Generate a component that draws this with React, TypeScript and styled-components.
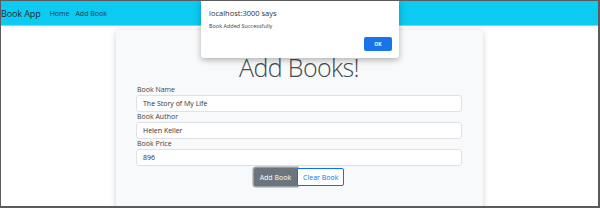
import React from "react";
import styled, { createGlobalStyle } from "styled-components";

const GlobalStyle = createGlobalStyle`
  html, body {
    margin: 0;
    padding: 0;
    background: #ffffff;
  }
  * {
    box-sizing: border-box;
  }
`;

const Frame = styled.div`
  position: relative;
  width: 600px;
  height: 208px;
  overflow: hidden;
  border-style: solid;
  border-color: #5b5b5b;
  border-width: 1px 2px 2px 1px;
  background: #ffffff;
  font-family: "Open Sans", "Noto Sans", sans-serif;
`;

const Navbar = styled.nav`
  display: flex;
  align-items: center;
  height: 25px;
  background: #0dcaf0;
  border-bottom: 1px solid #6fdff5;
  gap: 9px;
`;

const Brand = styled.span`
  font-size: 9px;
  letter-spacing: -0.1px;
  color: #1f2a33;
`;

const NavLinks = styled.ul`
  display: flex;
  gap: 6px;
  margin: 0;
  padding: 0;
  list-style: none;

  li {
    font-size: 7px;
    color: #1f3a4a;
  }
`;

const Card = styled.section`
  width: 367px;
  margin: 4px auto 0;
  padding: 19px 21px 20px 20px;
  background: #f8f9fa;
  border-radius: 4px;
  box-shadow: 0 1px 6px rgba(0, 0, 0, 0.18);
  min-height: 190px;
`;

const Title = styled.h1`
  margin: 0;
  text-align: center;
  font-size: 25px;
  font-weight: 300;
  line-height: 36px;
  color: #444a50;
  letter-spacing: -0.6px;
`;

const Field = styled.div`
  display: flex;
  flex-direction: column;
`;

const Label = styled.label`
  font-size: 7px;
  line-height: 9px;
  color: #3d4248;
  margin-left: 1px;
  margin-bottom: 1px;
`;

const Input = styled.div`
  height: 17px;
  display: flex;
  align-items: center;
  padding: 0 6px;
  background: #ffffff;
  border: 1px solid #dee2e6;
  border-radius: 3px;
  font-size: 7px;
  color: #2b3035;
`;

const Buttons = styled.div`
  display: flex;
  justify-content: center;
  margin-top: 2px;
`;

const Button = styled.button<{ $variant: "secondary" | "outline" }>`
  height: 18px;
  padding: 0 5px;
  font-family: inherit;
  font-size: 7px;
  border: 1px solid ${(p) => (p.$variant === "secondary" ? "#6c757d" : "#0d6efd")};
  background: ${(p) => (p.$variant === "secondary" ? "#6c757d" : "#ffffff")};
  color: ${(p) => (p.$variant === "secondary" ? "#ffffff" : "#0d6efd")};
  box-shadow: ${(p) =>
    p.$variant === "secondary" ? "0 0 0 1.5px rgba(90, 96, 102, 0.6)" : "none"};
  border-radius: ${(p) => (p.$variant === "secondary" ? "2px 0 0 2px" : "0 2px 2px 0")};
`;

const Dialog = styled.div`
  position: absolute;
  top: 0;
  left: 200px;
  width: 198px;
  height: 57px;
  background: #ffffff;
  border-radius: 0 0 3px 3px;
  box-shadow: 0 2px 6px rgba(0, 0, 0, 0.3);
  padding: 7px 7px 0 8px;
  display: flex;
  flex-direction: column;
`;

const DialogTitle = styled.div`
  font-size: 7.5px;
  color: #303134;
  line-height: 10px;
`;

const DialogText = styled.div`
  font-size: 5.5px;
  color: #3c4043;
  margin-top: 4px;
`;

const DialogFooter = styled.div`
  display: flex;
  justify-content: flex-end;
  margin-top: 7px;
`;

const OkButton = styled.button`
  width: 28px;
  height: 14px;
  padding: 0;
  border: none;
  border-radius: 2px;
  background: #1a73e8;
  color: #ffffff;
  font-family: inherit;
  font-size: 5px;
  font-weight: 700;
`;

const fields = [
  { label: "Book Name", value: "The Story of My Life" },
  { label: "Book Author", value: "Helen Keller" },
  { label: "Book Price", value: "896" },
];

export default function App() {
  return (
    <>
      <GlobalStyle />
      <Frame>
        <Navbar>
          <Brand>Book App</Brand>
          <NavLinks>
            <li>Home</li>
            <li>Add Book</li>
          </NavLinks>
        </Navbar>

        <Card>
          <Title>Add Books!</Title>
          {fields.map((f) => (
            <Field key={f.label}>
              <Label>{f.label}</Label>
              <Input>{f.value}</Input>
            </Field>
          ))}
          <Buttons>
            <Button $variant="secondary">Add Book</Button>
            <Button $variant="outline">Clear Book</Button>
          </Buttons>
        </Card>

        <Dialog>
          <DialogTitle>localhost:3000 says</DialogTitle>
          <DialogText>Book Added Successfully</DialogText>
          <DialogFooter>
            <OkButton>OK</OkButton>
          </DialogFooter>
        </Dialog>
      </Frame>
    </>
  );
}
